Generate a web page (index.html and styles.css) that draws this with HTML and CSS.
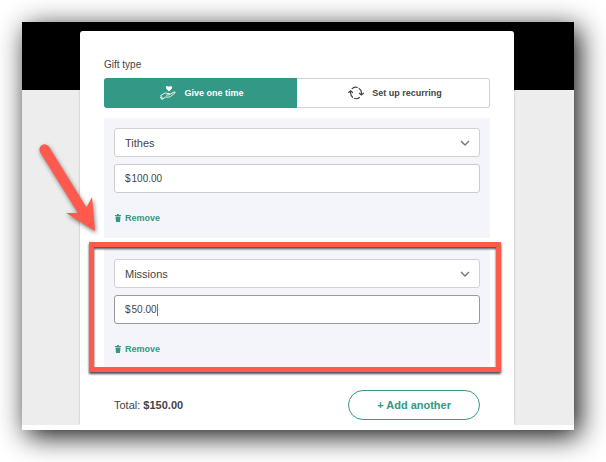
FILE: index.html
```html
<!DOCTYPE html>
<html lang="en">
<head>
  <meta charset="UTF-8" />
  <meta name="viewport" content="width=device-width, initial-scale=1.0"/>
  <title>Give</title>
  <link rel="stylesheet" href="styles.css">
</head>
<body>
  <main class="window">
    <form class="card">
      <div class="label" id="giftLabel">Gift type</div>
      <div class="tabs" role="group" aria-labelledby="giftLabel">
        <button type="button" class="tab active">
          <svg class="tab-icon" viewBox="0 0 16 14" fill="none" stroke="currentColor" stroke-linecap="round" stroke-linejoin="round">
            <path d="M9 5.500 6.300 2.800C4.800.8 7.500-1.200 9 .9 10.500-1.200 13.200.8 11.700 2.800Z" fill="currentColor" stroke="none"/>
            <path d="M1.200 9.300 4.200 7.300Q5.500 6.700 6.800 7.300L9.200 7.500Q10.300 7.900 9.500 8.700L6.600 9.100M9.800 8.300 14 6Q15.600 5.600 15.200 6.700L10.600 10.500Q9.800 11.100 8.500 11.100H5.500L2.800 12.800M.8 9.800 2.800 12.800 1.600 13.300.5 11.200" stroke-width=".9"/>
          </svg>
          Give one time
        </button>
        <button type="button" class="tab">
          <svg class="tab-icon" viewBox="0 0 16 14" fill="none" stroke="currentColor" stroke-width="1.2">
            <path d="M2.600 5.500V7A5.500 5.500 0 0 0 5 11.500M6 12.300A5.600 5.600 0 0 0 11.800 11.200M3.800 2.800A5.600 5.600 0 0 1 9.800 1.500M10.800 2.200A5.500 5.500 0 0 1 13.400 6.500V8.500"/>
            <path d="M.4 6.800 2.600 4.800 4.900 6.800M11.100 7 13.400 9 15.700 7"/>
          </svg>
          Set up recurring
        </button>
      </div>

      <section class="gift">
        <div class="select-wrap">
          <select aria-label="Fund">
            <option>Tithes</option>
            <option>Missions</option>
          </select>
          <svg class="chevron" viewBox="0 0 10 6"><path d="M1 1 5 5 9 1"/></svg>
        </div>
        <label class="amount">$<input type="text" value="100.00" aria-label="Amount for Tithes"></label>
        <button type="button" class="remove">
          <svg viewBox="0 0 6 8"><path d="M2 0H4V1H6V2H0V1H2ZM.5 2.500H5.500L5 8H1Z"/></svg>
          Remove
        </button>
      </section>

      <section class="gift marked">
        <div class="select-wrap">
          <select aria-label="Fund">
            <option>Missions</option>
            <option>Tithes</option>
          </select>
          <svg class="chevron" viewBox="0 0 10 6"><path d="M1 1 5 5 9 1"/></svg>
        </div>
        <label class="amount editing">$<input type="text" value="50.00" aria-label="Amount for Missions"><span class="caret"></span></label>
        <button type="button" class="remove">
          <svg viewBox="0 0 6 8"><path d="M2 0H4V1H6V2H0V1H2ZM.5 2.500H5.500L5 8H1Z"/></svg>
          Remove
        </button>
        <svg class="arrow" viewBox="0 0 60 92"><path d="M1 12A5.200 5.200 0 0 1 9.800 6.500L47.500 67.500 53 57 56 91 27 73 39 73Z"/></svg>
      </section>

      <div class="summary">
        <div>Total: <strong>$150.00</strong></div>
        <button type="button" class="add">+ Add another</button>
      </div>
    </form>
  </main>
</body>
</html>
```

FILE: styles.css
```css
* { box-sizing: border-box; }
body { margin: 0; padding: 22px 32px 32px 22px; background: #fff; color: #444; font-family: "Liberation Sans", Arial, sans-serif; font-size: 10px; }
button, input, select { font: inherit; color: inherit; }
button { padding: 0; background: none; border: none; cursor: pointer; }

.window { padding: 9px 60px 0 58px; border-bottom: 5px solid #fff; background: linear-gradient(#000 68px, #ededed 68px); box-shadow: 5px 6px 26px rgba(0,0,0,0.95); }
.card { padding: 27px 24px 5px; background: #fff; border-radius: 3px 3px 0 0; box-shadow: 0 -1px 2px rgba(0,0,0,0.3); }
.label { line-height: 14px; margin-bottom: 6px; }

.tabs { display: flex; height: 30px; margin-bottom: 10px; }
.tab { flex: 1; display: flex; align-items: center; justify-content: center; gap: 8px; padding-left: 4px; border: 1px solid #d2d2d2; border-left: none; border-radius: 0 3px 3px 0; font-size: 9px; font-weight: bold; }
.tab.active { background: #339886; border-color: #339886; border-radius: 3px 0 0 3px; color: #fff; }
.tab-icon { width: 16px; height: 14px; overflow: visible; }

.gift { position: relative; padding: 10px 10px 14px; background: #f4f5fa; }
.gift + .gift { margin-top: 11px; }
.select-wrap { position: relative; margin-bottom: 7px; }
select { display: block; width: 100%; height: 29px; padding: 0 30px 0 10px; appearance: none; background: #fff; border: 1px solid #d2d2d2; border-radius: 3px; font-size: 11px; }
.chevron { position: absolute; right: 10px; top: 12px; width: 10px; height: 6px; fill: none; stroke: #777; stroke-width: 1.4; pointer-events: none; }
.amount { position: relative; display: flex; align-items: center; gap: 1px; height: 29px; padding-left: 10px; background: #fff; border: 1px solid #ccc; border-radius: 3px; }
.amount.editing { border-color: #999; }
.amount input { flex: 1; min-width: 0; padding: 0; border: none; outline: none; background: none; }
.caret { position: absolute; left: 42px; top: 8px; width: 1px; height: 12px; background: #777; }
.remove { display: flex; align-items: center; gap: 4px; margin: 19px 0 0 1px; line-height: 12px; font-size: 9px; font-weight: bold; color: #339886; }
.remove svg { width: 6px; height: 8px; fill: currentColor; }

/* red callout around the second gift */
.marked::after { content: ""; position: absolute; inset: -7px -11px -3px -15px; border: 5px solid #ff5a4d; filter: drop-shadow(0 2px 1px rgba(0,0,0,0.7)); pointer-events: none; }
.arrow { position: absolute; left: -65px; top: -109px; width: 60px; height: 92px; overflow: visible; fill: #ff5a4d; filter: drop-shadow(1px 2px 2px rgba(0,0,0,0.5)); pointer-events: none; }

.summary { display: flex; align-items: center; justify-content: space-between; margin-top: 21px; padding: 0 10px; font-size: 11px; }
.add { height: 30px; padding: 0 28px; border: 1px solid #339886; border-radius: 15px; font-weight: bold; color: #339886; }
```
